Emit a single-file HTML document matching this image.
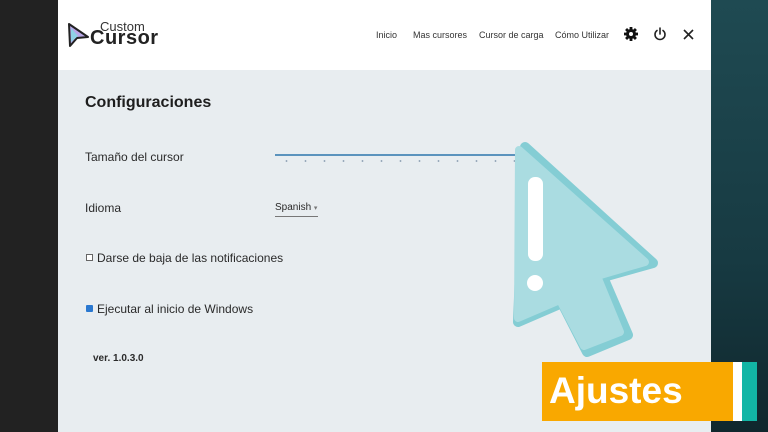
<!DOCTYPE html>
<html><head><meta charset="utf-8"><style>
*{margin:0;padding:0;box-sizing:border-box}
body{width:768px;height:432px;overflow:hidden;position:relative;background:#222;font-family:"Liberation Sans",sans-serif;color:#222}
.right{position:absolute;left:711px;top:0;width:57px;height:432px;background:linear-gradient(#1f4a52,#173a42 60%,#10272d)}
.win{position:absolute;left:58px;top:0;width:653px;height:432px;background:#e8edf0}
.hdr{position:absolute;left:0;top:0;width:653px;height:70px;background:#fff}
.nav{position:absolute;top:30px;font-size:9px;color:#333}
.t{position:absolute;font-size:12px;color:#2a2a2a}
</style></head><body>
<div class="right"></div>
<div class="win">
 <div class="hdr">
  <svg style="position:absolute;left:9px;top:22px" width="24" height="26" viewBox="0 0 24 26">
   <path d="M2 2 L21 15 L10 16 L3 24 Z" fill="#b9a7e8" stroke="#222" stroke-width="2" stroke-linejoin="round"/>
   <path d="M4 6 L4 20 L11 14 Z" fill="#8fd1e6"/>
  </svg>
  <div style="position:absolute;left:42px;top:19px;font-size:13px;color:#333">Custom</div>
  <div style="position:absolute;left:32px;top:27px;font-size:20px;font-weight:bold;color:#222;letter-spacing:0.5px">Cursor</div>
  <div class="nav" style="left:318px">Inicio</div>
  <div class="nav" style="left:355px">Mas cursores</div>
  <div class="nav" style="left:421px">Cursor de carga</div>
  <div class="nav" style="left:497px">Cómo Utilizar</div>
  <svg style="position:absolute;left:566px;top:27px" width="14" height="14" viewBox="0 0 14 14">
   <g fill="#111"><circle cx="7" cy="7" r="5"/>
   <rect x="5.6" y="0" width="2.8" height="14"/><rect x="0" y="5.6" width="14" height="2.8"/>
   <rect x="5.6" y="0" width="2.8" height="14" transform="rotate(45 7 7)"/><rect x="5.6" y="0" width="2.8" height="14" transform="rotate(-45 7 7)"/></g>
   <circle cx="7" cy="7" r="2" fill="#fff"/>
  </svg>
  <svg style="position:absolute;left:595px;top:27px" width="14" height="14" viewBox="0 0 14 14"><path d="M4 3.5 A5 5 0 1 0 10 3.5 M7 1 V7" fill="none" stroke="#222" stroke-width="1.6" stroke-linecap="round"/></svg>
  <svg style="position:absolute;left:625px;top:29px" width="11" height="11" viewBox="0 0 11 11"><path d="M1 1 L10 10 M10 1 L1 10" stroke="#222" stroke-width="1.6"/></svg>
 </div>
 <div class="t" style="left:27px;top:94px;font-size:16px;font-weight:bold;color:#1e1e1e">Configuraciones</div>
 <div class="t" style="left:27px;top:150px">Tamaño del cursor</div>
 <div style="position:absolute;left:217px;top:154px;width:242px;height:2px;background:#5b93bd"></div>
 <div style="position:absolute;left:219px;top:160px;width:240px;height:2px;background:radial-gradient(circle,#9ab 0.8px,transparent 1px) 0 0/19px 2px"></div>
 <div class="t" style="left:27px;top:201px">Idioma</div>
 <div class="t" style="left:217px;top:202px;font-size:10px">Spanish <span style="font-size:7px;color:#777">▾</span></div>
 <div style="position:absolute;left:217px;top:216px;width:43px;height:1px;background:#777"></div>
 <div style="position:absolute;left:28px;top:254px;width:7px;height:7px;border:1px solid #666;background:#fff"></div>
 <div class="t" style="left:39px;top:251px">Darse de baja de las notificaciones</div>
 <div style="position:absolute;left:28px;top:305px;width:7px;height:7px;background:#2a78d0;border-radius:1px"></div>
 <div class="t" style="left:39px;top:302px">Ejecutar al inicio de Windows</div>
 <div class="t" style="left:35px;top:353px;font-size:10px;font-weight:bold">ver. 1.0.3.0</div>
</div>
<svg style="position:absolute;left:0;top:0" width="768" height="432">
 <path d="M525 147 L653 263 L603 277 L628 335 L587 352 L562 303 L518 322 Z" fill="#84cdd4" stroke="#84cdd4" stroke-width="10" stroke-linejoin="round"/>
 <path d="M519 150 L645 262 L597 276 L620 332 L584 346 L560 300 L518 318 Z" fill="#aadce1" stroke="#aadce1" stroke-width="8" stroke-linejoin="round"/>
 <rect x="528" y="177" width="15" height="84" rx="7" fill="#fff"/>
 <circle cx="535" cy="283" r="8" fill="#fff"/>
</svg>
<div style="position:absolute;left:542px;top:362px;width:191px;height:59px;background:#f9a800"></div>
<div style="position:absolute;left:733px;top:362px;width:9px;height:59px;background:#fff"></div>
<div style="position:absolute;left:742px;top:362px;width:15px;height:59px;background:#12b5a5"></div>
<div style="position:absolute;left:549px;top:370px;font-size:37px;font-weight:bold;color:#fff;letter-spacing:0px">Ajustes</div>
</body></html>
